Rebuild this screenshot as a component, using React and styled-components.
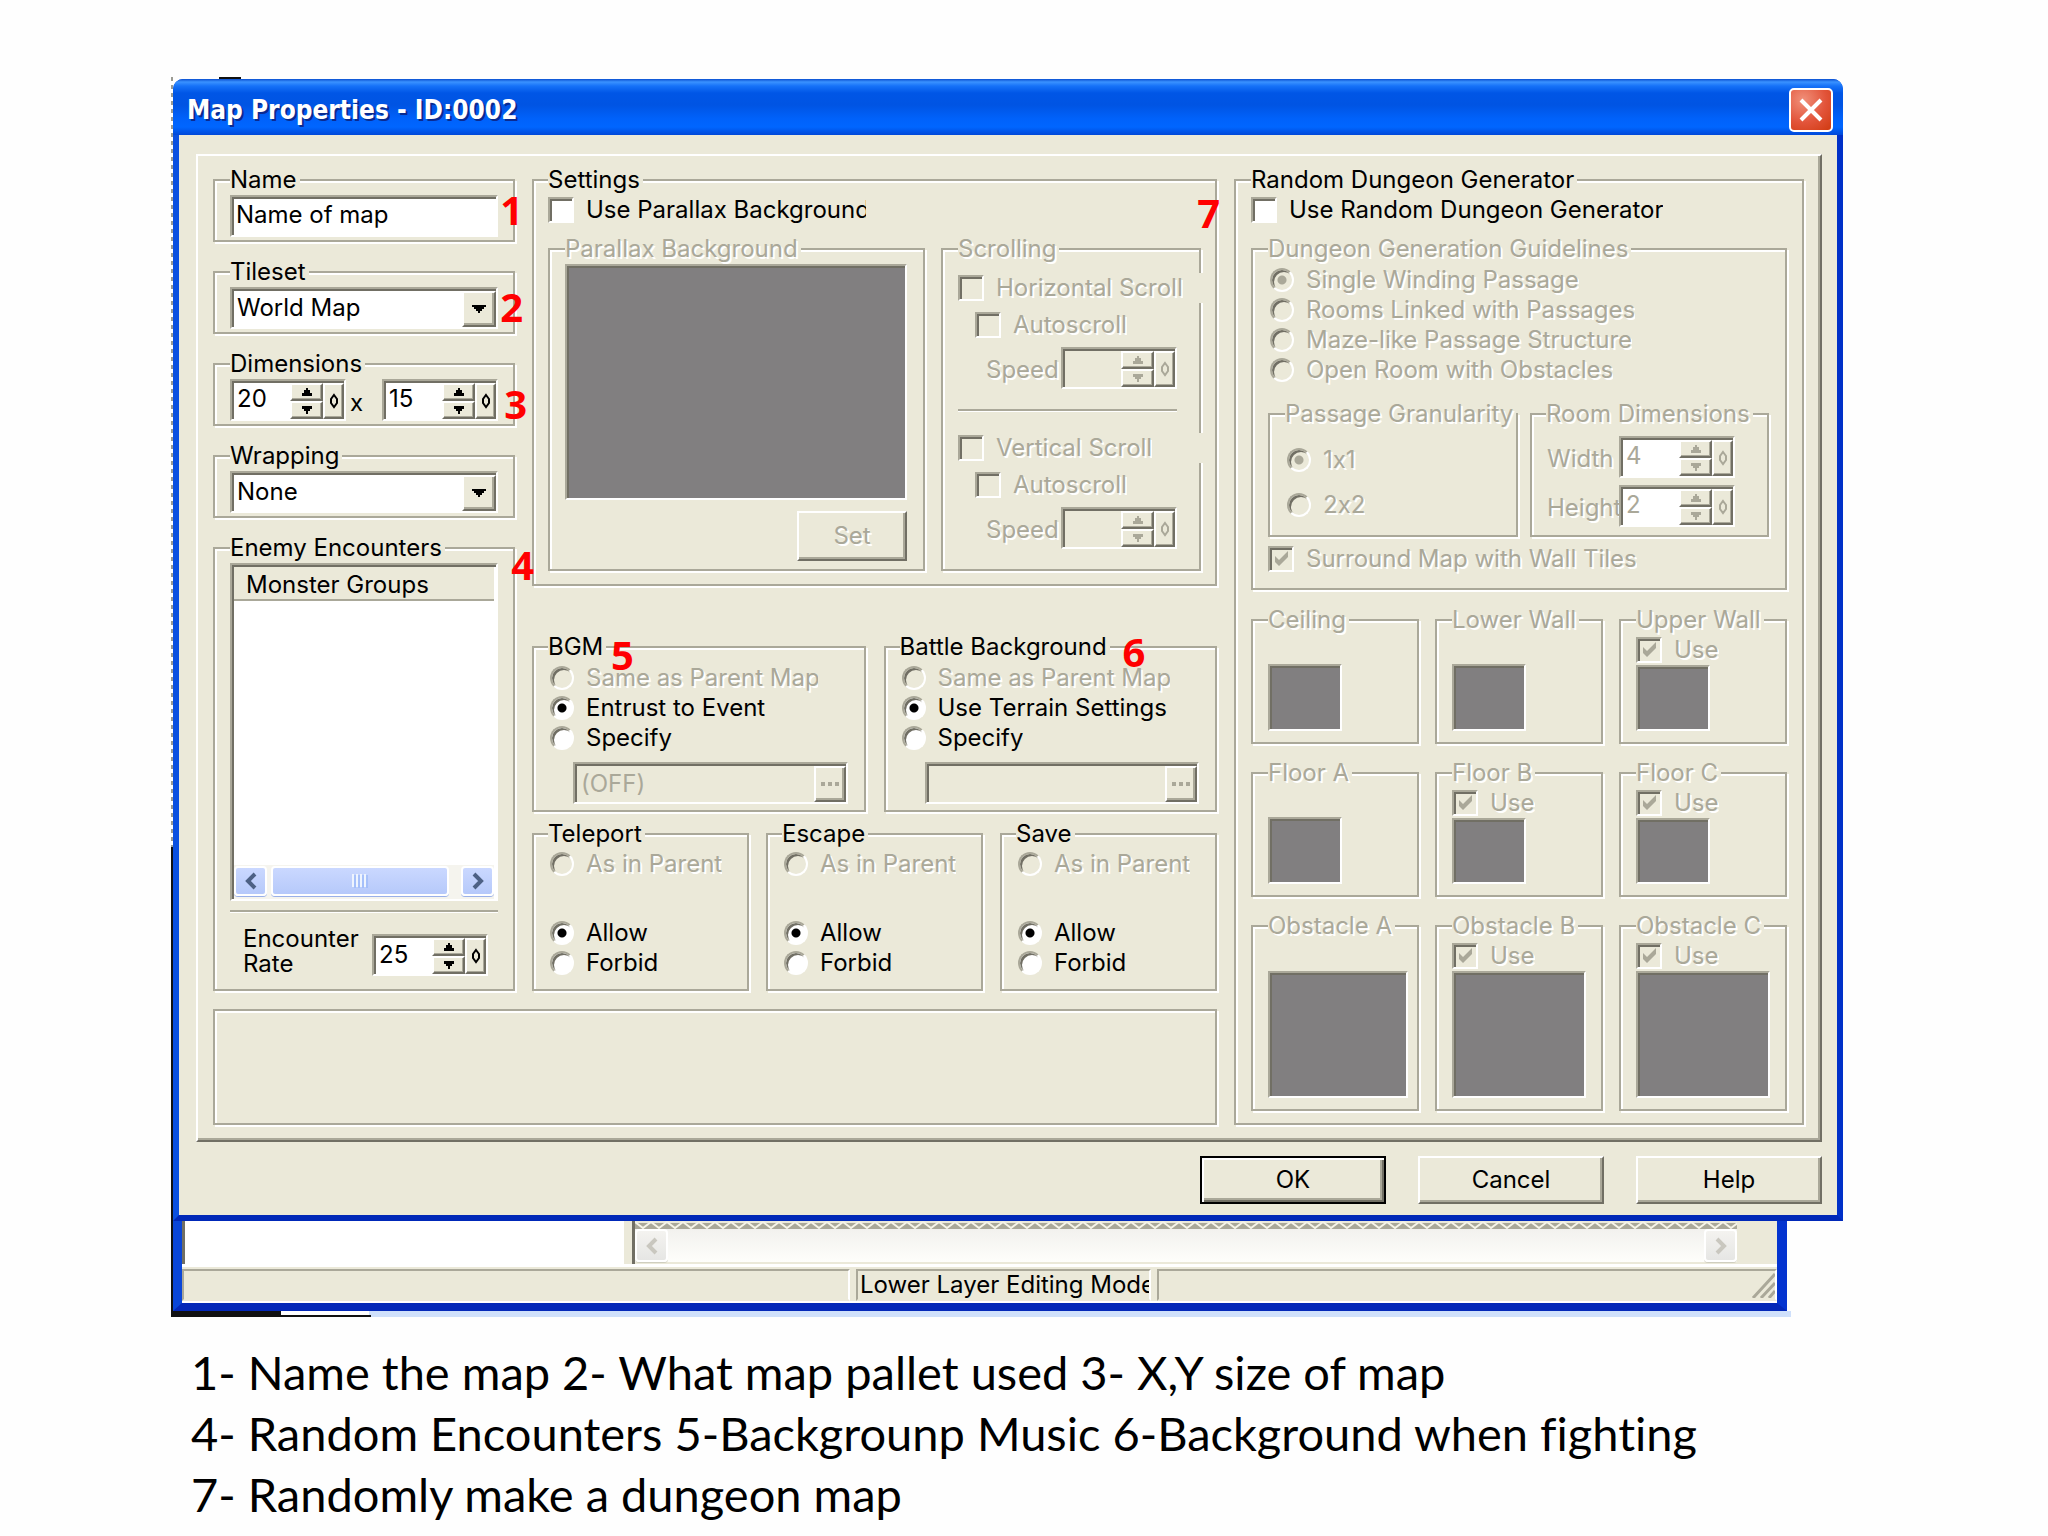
import styled, { createGlobalStyle, css } from "styled-components";

const face = "#ebe9d9";
const line = "#aaa899";
const dark = "#716f64";

const GlobalStyle = createGlobalStyle`
  * { box-sizing: border-box; }
  body {
    margin: 0;
    background: #fefefe;
    color: #000;
    font-family: Inter, "Liberation Sans", sans-serif;
    font-size: 24px;
    line-height: 30px;
    font-variant-ligatures: none;
  }
  input, select, button { font: inherit; color: inherit; margin: 0; }
`

const raised = css`
  background: ${face};
  border: 2px solid;
  border-color: #fff ${dark} ${dark} #fff;
  box-shadow: inset -2px -2px ${line};
`

const sunken = css`
  border: 2px solid;
  border-color: ${line} #fff #fff ${line};
  box-shadow: inset 2px 2px ${dark};
`

const Slide = styled.main`
  padding: 77px 205px 0 171px;
`

const Shot = styled.section`
  padding: 2px 0 0 2px;
  background:
    linear-gradient(#111, #111) 48px 0 / 22px 2px no-repeat,
    linear-gradient(#111, #111) 0 100% / 2px 470px no-repeat,
    repeating-linear-gradient(#9b9b93 0 4px, #fff 4px 8px) 0 0 / 2px 100% no-repeat;
`

const Dialog = styled.div`
  border-radius: 10px 10px 0 0;
  background: #0a50e0;
`

const TitleBar = styled.header`
  height: 56px;
  padding: 5px 10px 0 14px;
  display: flex;
  align-items: center;
  justify-content: space-between;
  border-radius: 10px 10px 0 0;
  background: linear-gradient(#0a4fd0 0, #3a92ff 3px, #1672f8 7px, #0056e6 14px, #0054e3 26px, #0062fb 40px, #0066ff 48px, #0048d8 56px);
`

const Title = styled.h1`
  margin: 0;
  color: #fff;
  font-family: "DejaVu Sans Condensed", "DejaVu Sans", sans-serif;
  font-size: 26px;
  font-weight: bold;
  text-shadow: 2px 2px #0a2a90;
`

const CloseButton = styled.button`
  width: 44px;
  height: 44px;
  padding: 0;
  display: flex;
  align-items: center;
  justify-content: center;
  border: 2px solid #fff;
  border-radius: 5px;
  background: radial-gradient(circle at 30% 25%, #f0907a, #e2543a 55%, #d03a10);
`

const DialogBody = styled.div`
  padding: 19px 15px 11px 17px;
  background: ${face};
  border: solid;
  border-width: 0 6px 6px 6px;
  border-color: #0a50e0 #0030c8 #0028b8 #0a50e0;
`

const Panel = styled.div`
  padding: 9px 16px 15px 15px;
  border: 2px solid;
  border-color: #fff ${dark} ${dark} #fff;
  box-shadow: inset -2px -2px ${line};
  display: grid;
  grid-template-columns: 302px minmax(0, 1fr) 570px;
  grid-template-rows: auto 116px;
  gap: 18px 17px;
`

const Column = styled.div`
  display: flex;
  flex-direction: column;
  gap: ${p => p.$gap}px;
  min-width: 0;
`

const Columns = styled.div`
  display: grid;
  grid-template-columns: ${p => p.$cols};
  gap: ${p => p.$gap}px;
`

const Group = styled.fieldset`
  position: relative;
  margin: 0;
  min-width: 0;
  padding: ${p => p.$pad || "0 15px 3px 15px"};
  border: 2px solid ${line};
  box-shadow: 2px 2px #fff, inset 2px 2px #fff;
  ${p => p.$dim && css`
    color: ${line};
    text-shadow: 2px 2px #fff;
  `}
`

const Legend = styled.legend`
  padding: 0 3px 0 0;
  background: ${face};
  white-space: nowrap;
`

const EmptyPanel = styled.div`
  grid-column: 1 / 3;
  border: 2px solid ${line};
  box-shadow: 2px 2px #fff, inset 2px 2px #fff;
`

const Dungeon = styled(Group)`
  grid-column: 3;
  grid-row: 1 / 3;
  display: flex;
  flex-direction: column;
`

// red callout that sits over the corner of a group
const Callout = styled.b`
  position: absolute;
  z-index: 2;
  top: ${p => p.$top}px;
  ${p => p.$left ? `left: ${p.$left}px;` : `right: ${p.$right}px;`}
  color: #f00;
  font: bold 40px/40px "Open Sans", sans-serif;
  text-shadow: none;
`

const TextInput = styled.input`
  ${sunken}
  display: block;
  width: 100%;
  height: 42px;
  padding: 0 4px 3px;
  background: #fff;
`

const SelectBox = styled.div`
  ${sunken}
  height: 42px;
  padding: 2px 0 0 2px;
  display: flex;
  background: #fff;
  select {
    flex: 1;
    appearance: none;
    border: 0;
    padding: 0 3px 2px;
    background: none;
  }
`

const DropArrow = styled.span`
  ${raised}
  width: 34px;
  display: flex;
  align-items: center;
  justify-content: center;
`

const SpinBox = styled.div`
  ${sunken}
  width: 116px;
  height: 42px;
  padding: 2px 0 0 2px;
  display: flex;
  flex: none;
  background: ${p => p.$gray ? face : "#fff"};
  color: ${p => p.$dim ? line : "#000"};
  input {
    flex: 1;
    min-width: 0;
    padding: 0 3px 4px;
    border: 0;
    background: none;
  }
  div {
    width: 33px;
    display: grid;
    grid-template-rows: 1fr 1fr;
  }
`

const SpinButton = styled.button`
  ${raised}
  box-shadow: inset -1px -1px ${line};
  min-width: 21px;
  padding: 0;
  display: flex;
  align-items: center;
  justify-content: center;
`

const Option = styled.label`
  display: flex;
  align-items: center;
  gap: 12px;
  height: 30px;
  margin-left: ${p => p.$indent || 0}px;
  white-space: nowrap;
  ${p => p.$dim && css`
    color: ${line};
    text-shadow: 2px 2px #fff;
  `}
  ${p => p.$over && css`
    margin-right: -27px;
    background: ${face};
  `}
  span {
    overflow: hidden;
    max-width: ${p => p.$clip ? p.$clip + "px" : "none"};
  }
`

const Check = styled.input`
  ${sunken}
  appearance: none;
  flex: none;
  width: 26px;
  height: 26px;
  background: ${p => p.disabled ? face : "#fff"};
  &:checked {
    background: ${face} url('data:image/svg+xml,<svg xmlns="http://www.w3.org/2000/svg" viewBox="0 0 22 22"><path d="M5 8v6l4 4 9-9V3l-9 9z" fill="%23aaa899"/></svg>') center / 22px no-repeat;
  }
`

const Radio = styled.input`
  appearance: none;
  flex: none;
  width: 24px;
  height: 24px;
  margin: 0 0 0 2px !important;
  border-radius: 50%;
  border: 2px solid;
  border-color: ${line} #fff #fff ${line};
  box-shadow: inset 2px 2px ${dark};
  background: ${p => p.disabled ? face : "#fff"};
  &:checked {
    background: radial-gradient(circle, ${p => p.disabled ? line : "#000"} 0 4px, ${p => p.disabled ? face : "#fff"} 5px);
  }
`

const PushButton = styled.button`
  ${raised}
  width: ${p => p.$w || 186}px;
  height: ${p => p.$h || 48}px;
  padding: 0;
  ${p => p.$default && "outline: 2px solid #000; outline-offset: -2px; border-color: #000; box-shadow: inset 2px 2px #fff, inset -2px -2px #716f64, inset -4px -4px #aaa899;"}
  ${p => p.disabled && css`
    color: ${line};
    text-shadow: 2px 2px #fff;
  `}
`

const Swatch = styled.div`
  ${sunken}
  width: ${p => p.$w};
  height: ${p => p.$h}px;
  background: #817f80;
`

const Rule = styled.hr`
  width: 100%;
  margin: 0;
  border: 0;
  height: 3px;
  background: linear-gradient(${line} 2px, #fff 2px);
`

const List = styled.div`
  ${sunken}
  height: 338px;
  padding: 2px 2px 0 2px;
  display: flex;
  flex-direction: column;
  background: #fff;
  h2 {
    margin: 0;
    padding: 3px 0 0 12px;
    height: 34px;
    font: inherit;
    background: ${face};
    border-bottom: 2px solid ${line};
  }
`

const ScrollBar = styled.div`
  margin-top: auto;
  height: 34px;
  padding: 1px 0 3px;
  display: flex;
  background: #f5f4ee;
`

const ScrollButton = styled.button`
  width: 33px;
  flex: none;
  padding: 0;
  display: flex;
  align-items: center;
  justify-content: center;
  border: 2px solid #fff;
  border-radius: 4px;
  background: ${p => p.$gray ? "linear-gradient(#f4f3f0, #e6e6e4)" : "linear-gradient(#cad8ff, #b6c9fa)"};
  box-shadow: 0 1px ${p => p.$gray ? "#cfcebf" : "#9ab0e8"};
`

const Thumb = styled(ScrollButton)`
  width: 178px;
  margin: 0 12px 0 4px;
`

const RateRow = styled.div`
  display: flex;
  align-items: flex-end;
  justify-content: space-between;
  padding: 13px 10px 13px 13px;
  line-height: 25px;
`

const Scroller = styled.div`
  display: flex;
  flex-direction: column;
  gap: 7px;
`

const SpeedRow = styled.div`
  display: flex;
  align-items: center;
  justify-content: flex-end;
  label {
    width: ${p => p.$w}px;
    padding-top: 3px;
    overflow: hidden;
    white-space: nowrap;
  }
`

const FileBox = styled.div`
  ${sunken}
  height: 42px;
  margin: 9px 2px 0 25px;
  padding: 2px 0 0 2px;
  display: flex;
  input {
    flex: 1;
    min-width: 0;
    border: 0;
    padding: 0 4px;
    background: none;
    color: ${line};
  }
  button {
    ${raised}
    width: 32px;
    padding: 0;
    display: flex;
    align-items: center;
    justify-content: center;
  }
`

const Footer = styled.footer`
  display: flex;
  justify-content: flex-end;
  gap: 32px;
  margin-top: 14px;
`

const BackWindow = styled.div`
  margin-right: 56px;
  border: solid;
  border-width: 0 10px 8px 9px;
  border-color: #0838d0 #0434d0 #0428b8 #0a46d8;
  background: ${face};
`

const BackRow = styled.div`
  height: 46px;
  display: flex;
  border-bottom: 3px solid #fff;
`

const TreePane = styled.div`
  width: 442px;
  border-left: 3px solid ${dark};
  background: #fff;
`

const CanvasPane = styled.div`
  flex: 1;
  margin: 0 40px 0 8px;
  border-left: 3px solid ${dark};
  background: url('data:image/svg+xml,<svg xmlns="http://www.w3.org/2000/svg" width="16" height="8"><path d="M0 2h16v6H0z" fill="%23aaa899"/><path d="M0 1l8 6 8-6" fill="none" stroke="%23f6f4e8" stroke-width="2"/></svg>') 0 0 / 16px 8px repeat-x;
  padding-top: 8px;
`

const BackScroll = styled.div`
  height: 33px;
  display: flex;
  justify-content: space-between;
  background: linear-gradient(#f2f1ee, #fefefb);
`

const StatusBar = styled.div`
  height: 34px;
  margin-top: 2px;
  display: grid;
  grid-template-columns: 668px 295px 1fr;
  column-gap: 6px;
  border-bottom: 2px solid #fff;
`

const StatusCell = styled.div`
  border: 2px solid;
  border-color: ${line} #fff ${face} ${line};
  padding-left: 2px;
  display: flex;
  justify-content: ${p => p.$end ? "flex-end" : "flex-start"};
  align-items: center;
  overflow: hidden;
  white-space: nowrap;
`

const Taskbar = styled.div`
  height: 6px;
  margin-right: 52px;
  background:
    linear-gradient(#111, #111) 0 100% / 198px 2px no-repeat,
    linear-gradient(90deg, #111 108px, #fff 108px 196px, #cfe0fb 196px);
`

const Caption = styled.p`
  margin: 25px 0 0 20px;
  font: 47px/61px Lato, sans-serif;
  font-variant-ligatures: none;
`

const Arrow = ({ up, color = "#000" }) => (
  <svg width="12" height="8" viewBox="0 0 12 8">
    <path d={up ? "M5 0h2v2h2v3h2v3H1V5h2V2h2z" : "M1 0h10v3H9v2H7v3H5V5H3V3H1z"} fill={color} />
  </svg>
)

const Chevron = ({ right, color = "#4d6185" }) => (
  <svg width="14" height="18" viewBox="0 0 14 18">
    <path d={right ? "M3 2l7 7-7 7" : "M11 2L4 9l7 7"} fill="none" stroke={color} strokeWidth="4" />
  </svg>
)

const Spinner = ({ id, value, dim, gray, label }) => {
  const ink = dim ? line : "#000"
  return (
    <SpinBox $dim={dim} $gray={gray}>
      <input id={id} aria-label={label} defaultValue={value} disabled={dim} />
      <div>
        <SpinButton aria-label="Increase" disabled={dim}><Arrow up color={ink} /></SpinButton>
        <SpinButton aria-label="Decrease" disabled={dim}><Arrow color={ink} /></SpinButton>
      </div>
      <SpinButton aria-label="Adjust" disabled={dim}>
        <svg width="12" height="18" viewBox="0 0 12 18">
          <path d="M6 3l3 4v4l-3 4-3-4V7z" fill="none" stroke={ink} strokeWidth="2" />
        </svg>
      </SpinButton>
    </SpinBox>
  )
}

const Drop = ({ label, value }) => (
  <SelectBox>
    <select aria-label={label} defaultValue={value}><option>{value}</option></select>
    <DropArrow>
      <svg width="14" height="8" viewBox="0 0 14 8"><path d="M0 0h14v2h-2v2h-2v2H8v2H6V6H4V4H2V2H0z" /></svg>
    </DropArrow>
  </SelectBox>
)

const RadioRow = ({ name, text, checked, dim, clip }) => (
  <Option $dim={dim} $clip={clip}>
    <Radio type="radio" name={name} defaultChecked={checked} disabled={dim} />
    <span>{text}</span>
  </Option>
)

const CheckRow = ({ text, checked, dim, clip, indent, over }) => (
  <Option $dim={dim} $clip={clip} $indent={indent} $over={over}>
    <Check type="checkbox" defaultChecked={checked} disabled={dim} />
    <span>{text}</span>
  </Option>
)

const ScrollSettings = ({ name }) => (
  <Scroller>
    <CheckRow text={`${name} Scroll`} dim over />
    <CheckRow text="Autoscroll" dim indent={17} />
    <SpeedRow $w={75}>
      <label htmlFor={name}>Speed</label>
      <Spinner id={name} value="" dim gray />
    </SpeedRow>
  </Scroller>
)

const PermissionChoices = styled.div`
  margin-top: 39px;
`

const Permission = ({ name }) => (
  <Group $pad="0 14px 11px 14px">
    <Legend>{name}</Legend>
    <RadioRow name={name} text="As in Parent" dim />
    <PermissionChoices>
      <RadioRow name={name} text="Allow" checked />
      <RadioRow name={name} text="Forbid" />
    </PermissionChoices>
  </Group>
)

const Source = ({ name, children, middle, value, pick }) => (
  <Group $pad="1px 14px 6px 14px">
    <Legend>{name}</Legend>
    {children}
    <RadioRow name={name} text="Same as Parent Map" dim clip={232} />
    <RadioRow name={name} text={middle} checked />
    <RadioRow name={name} text="Specify" />
    <FileBox>
      <input aria-label={pick} defaultValue={value} disabled />
      <button aria-label={`Choose ${pick}`} disabled>
        <svg width="18" height="4" viewBox="0 0 18 4"><path d="M0 0h4v4H0zM7 0h4v4H7zM14 0h4v4h-4z" fill={line} /></svg>
      </button>
    </FileBox>
  </Group>
)

const Tile = styled(Group)`
  display: flex;
  flex-direction: column;
`

const TileSpace = styled.div`
  height: 30px;
`

const TileGrid = styled.div`
  margin-top: 15px;
  display: grid;
  grid-template-columns: repeat(3, 1fr);
  grid-template-rows: 139px 139px 200px;
  gap: 14px 16px;
`

const tiles = [
  { name: "Ceiling" },
  { name: "Lower Wall" },
  { name: "Upper Wall", use: true },
  { name: "Floor A" },
  { name: "Floor B", use: true },
  { name: "Floor C", use: true },
  { name: "Obstacle A", size: "140px" },
  { name: "Obstacle B", use: true, size: "134px" },
  { name: "Obstacle C", use: true, size: "134px" },
]

const PreviewGroup = styled(Group)`
  display: flex;
  flex-direction: column;
  align-items: flex-end;
  gap: 11px;
`

const ScrollGroup = styled(Group)`
  display: flex;
  flex-direction: column;
  ${Rule} { margin: 20px 0 21px; }
`

const SizeRow = styled.div`
  display: flex;
  align-items: flex-end;
  justify-content: space-between;
  span { width: 28px; padding-bottom: 3px; }
`

const RuleSpace = styled.div`
  padding-top: 9px;
`

const SettingsGroup = styled(Group)`
  margin-bottom: 39px;
  ${Columns} { margin-top: 9px; }
`

const GuideGroup = styled(Group)`
  margin-top: 9px;
`

const NestedColumns = styled(Columns)`
  margin: 14px 0 7px;
`

const passages = ["Single Winding Passage", "Rooms Linked with Passages", "Maze-like Passage Structure", "Open Room with Obstacles"]

const App = () => {
  return (
    <>
      <GlobalStyle />
      <Slide>
        <Shot>
          <Dialog>
            <TitleBar>
              <Title>Map Properties - ID:0002</Title>
              <CloseButton aria-label="Close">
                <svg width="26" height="26" viewBox="0 0 26 26"><path d="M3 3l20 20M23 3L3 23" stroke="#fff" strokeWidth="4" /></svg>
              </CloseButton>
            </TitleBar>
            <DialogBody>
              <Panel>
                <Column $gap={15}>
                  <Group>
                    <Legend>Name</Legend>
                    <TextInput aria-label="Name" defaultValue="Name of map" />
                    <Callout $top={-5} $right={-10}>1</Callout>
                  </Group>
                  <Group>
                    <Legend>Tileset</Legend>
                    <Drop label="Tileset" value="World Map" />
                    <Callout $top={0} $right={-10}>2</Callout>
                  </Group>
                  <Group>
                    <Legend>Dimensions</Legend>
                    <SizeRow>
                      <Spinner label="Map width" value="20" />
                      <span>x</span>
                      <Spinner label="Map height" value="15" />
                    </SizeRow>
                    <Callout $top={5} $right={-14}>3</Callout>
                  </Group>
                  <Group>
                    <Legend>Wrapping</Legend>
                    <Drop label="Wrapping" value="None" />
                  </Group>
                  <Group $pad="0 15px">
                    <Legend>Enemy Encounters</Legend>
                    <List>
                      <h2>Monster Groups</h2>
                      <ScrollBar>
                        <ScrollButton aria-label="Scroll left"><Chevron /></ScrollButton>
                        <Thumb aria-label="Scroll position">
                          <svg width="16" height="14" viewBox="0 0 16 14"><path d="M1 0v13M5 0v13M9 0v13M13 0v13" stroke="#eef4fe" strokeWidth="2" /><path d="M3 1v13M7 1v13M11 1v13M15 1v13" stroke="#8cb0f8" /></svg>
                        </Thumb>
                        <ScrollButton aria-label="Scroll right"><Chevron right /></ScrollButton>
                      </ScrollBar>
                    </List>
                    <RuleSpace><Rule /></RuleSpace>
                    <RateRow>
                      <label htmlFor="rate">Encounter<br />Rate</label>
                      <Spinner id="rate" value="25" />
                    </RateRow>
                    <Callout $top={-18} $right={-21}>4</Callout>
                  </Group>
                </Column>
                <Column $gap={7}>
                  <SettingsGroup $pad="0 14px 13px 14px">
                    <Legend>Settings</Legend>
                    <Callout $top={-2} $right={-5}>7</Callout>
                    <CheckRow text="Use Parallax Background" clip={280} />
                    <Columns $cols="minmax(0, 1fr) 260px" $gap={16}>
                      <PreviewGroup $dim $pad="0 16px 8px 15px">
                        <Legend>Parallax Background</Legend>
                        <Swatch $w="100%" $h={236} />
                        <PushButton $w={110} $h={50} disabled>Set</PushButton>
                      </PreviewGroup>
                      <ScrollGroup $dim $pad="9px 22px 19px 15px">
                        <Legend>Scrolling</Legend>
                        <ScrollSettings name="Horizontal" />
                        <Rule />
                        <ScrollSettings name="Vertical" />
                      </ScrollGroup>
                    </Columns>
                  </SettingsGroup>
                  <Columns $cols="1fr 1fr" $gap={18}>
                    <Source name="BGM" middle="Entrust to Event" value="(OFF)" pick="music">
                      <Callout $top={-27} $left={77}>5</Callout>
                    </Source>
                    <Source name="Battle Background" middle="Use Terrain Settings" value="" pick="background">
                      <Callout $top={-30} $left={237}>6</Callout>
                    </Source>
                  </Columns>
                  <Columns $cols="1fr 1fr 1fr" $gap={17}>
                    <Permission name="Teleport" />
                    <Permission name="Escape" />
                    <Permission name="Save" />
                  </Columns>
                </Column>
                <Dungeon $pad="0 15px 12px 15px">
                  <Legend>Random Dungeon Generator</Legend>
                  <CheckRow text="Use Random Dungeon Generator" />
                  <GuideGroup $dim $pad="1px 16px 14px 15px">
                    <Legend>Dungeon Generation Guidelines</Legend>
                    {passages.map((text, i) => (
                      <RadioRow key={text} name="passage" text={text} checked={i === 0} dim />
                    ))}
                    <NestedColumns $cols="250px minmax(0, 1fr)" $gap={12}>
                      <Group $dim $pad="16px 0 15px 15px">
                        <Legend>Passage Granularity</Legend>
                        <Column $gap={15}>
                          <RadioRow name="grain" text="1x1" checked dim />
                          <RadioRow name="grain" text="2x2" dim />
                        </Column>
                      </Group>
                      <Group $dim $pad="7px 32px 8px 14px">
                        <Legend>Room Dimensions</Legend>
                        <Column $gap={7}>
                          <SpeedRow $w={72}><label htmlFor="roomW">Width</label><Spinner id="roomW" value="4" dim /></SpeedRow>
                          <SpeedRow $w={72}><label htmlFor="roomH">Height</label><Spinner id="roomH" value="2" dim /></SpeedRow>
                        </Column>
                      </Group>
                    </NestedColumns>
                    <CheckRow text="Surround Map with Wall Tiles" checked dim />
                  </GuideGroup>
                  <TileGrid>
                    {tiles.map(t => (
                      <Tile key={t.name} $dim $pad="0 9px 11px 15px">
                        <Legend>{t.name}</Legend>
                        {t.use ? <CheckRow text="Use" checked dim /> : <TileSpace />}
                        <Swatch $w={t.size || "74px"} $h={t.size ? 129 : 68} />
                      </Tile>
                    ))}
                  </TileGrid>
                </Dungeon>
                <EmptyPanel />
              </Panel>
              <Footer>
                <PushButton $default>OK</PushButton>
                <PushButton>Cancel</PushButton>
                <PushButton>Help</PushButton>
              </Footer>
            </DialogBody>
          </Dialog>
          <BackWindow>
            <BackRow>
              <TreePane />
              <CanvasPane>
                <BackScroll>
                  <ScrollButton $gray aria-label="Scroll map left"><Chevron color="#c9c7bf" /></ScrollButton>
                  <ScrollButton $gray aria-label="Scroll map right"><Chevron right color="#c9c7bf" /></ScrollButton>
                </BackScroll>
              </CanvasPane>
            </BackRow>
            <StatusBar>
              <StatusCell />
              <StatusCell>Lower Layer Editing Mode</StatusCell>
              <StatusCell $end>
                <svg width="24" height="26" viewBox="0 0 24 26"><path d="M2 26L24 2M10 26L24 11M18 26l6-7" stroke={line} strokeWidth="3" /></svg>
              </StatusCell>
            </StatusBar>
          </BackWindow>
          <Taskbar />
        </Shot>
        <Caption>
          1- Name the map 2- What map pallet used 3- X,Y size of map<br />
          4- Random Encounters 5-Backgrounp Music 6-Background when fighting<br />
          7- Randomly make a dungeon map
        </Caption>
      </Slide>
    </>
  )
}

export default App;
